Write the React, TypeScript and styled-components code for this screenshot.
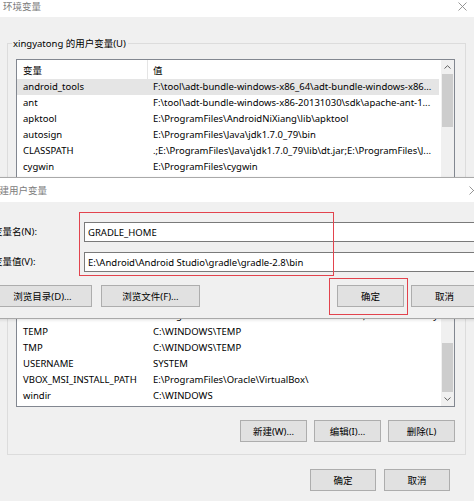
import React from 'react';
import styled, { createGlobalStyle } from 'styled-components';

const GlobalStyle = createGlobalStyle`
  html, body { margin: 0; padding: 0; background: #f0f0f0; }
  body {
    font-family: "Noto Sans", "Noto Sans CJK SC", sans-serif;
    font-size: 9.5px;
    color: #000;
  }
  * { box-sizing: border-box; }
`;

const Stage = styled.div`
  position: relative;
  width: 474px;
  height: 501px;
  overflow: hidden;
  background: #f0f0f0;
`;

const Window = styled.div`
  display: flex;
  flex-direction: column;
  height: 100%;
`;

const TitleBar = styled.div<{ $tall?: boolean }>`
  display: flex;
  align-items: center;
  flex-shrink: 0;
  background: #fff;
  height: ${(p) => (p.$tall ? 24 : 17)}px;
  padding: ${(p) => (p.$tall ? '0 10px 0 7px' : '0 7px 4px 3px')};
`;

const TitleText = styled.span`
  color: #7c7c7c;
  line-height: 13px;
  white-space: nowrap;
`;

const CloseBtn = styled.svg`
  margin-left: auto;
  width: 9px;
  height: 9px;
  flex-shrink: 0;
`;

const MainBody = styled.div`
  flex: 1;
  display: flex;
  flex-direction: column;
  padding: 26px 8px 9px 7px;
`;

const GroupBox = styled.div<{ $gapTop?: number }>`
  display: flex;
  flex-direction: column;
  border: 1px solid #dcdcdc;
  padding: 0 10px 12px 8px;
  margin-top: ${(p) => p.$gapTop ?? 0}px;
`;

const GroupTitle = styled.span`
  align-self: flex-start;
  margin: -7px 0 0 -4px;
  padding: 0 2px 0 1px;
  height: 13px;
  line-height: 13px;
  background: #f0f0f0;
  white-space: nowrap;
`;

const ListBox = styled.div<{ $h: number }>`
  display: flex;
  margin-top: 9px;
  height: ${(p) => p.$h}px;
  border: 1px solid #828790;
  background: #fff;
`;

const ListMain = styled.div`
  flex: 1;
  min-width: 0;
  display: flex;
  flex-direction: column;
  overflow: hidden;
`;

const HeaderRow = styled.div`
  display: grid;
  grid-template-columns: 131px 1fr;
  height: 19px;
  flex-shrink: 0;
`;

const HeaderCell = styled.div<{ $first?: boolean }>`
  display: flex;
  align-items: center;
  padding-left: ${(p) => (p.$first ? 6 : 5)}px;
  border-right: ${(p) => (p.$first ? '1px solid #e5e5e5' : 'none')};
`;

const Rows = styled.div<{ $bottom?: boolean }>`
  flex: 1;
  display: flex;
  flex-direction: column;
  justify-content: ${(p) => (p.$bottom ? 'flex-end' : 'flex-start')};
  overflow: hidden;
  padding-bottom: ${(p) => (p.$bottom ? 2 : 0)}px;
`;

const Row = styled.div<{ $selected?: boolean }>`
  display: grid;
  grid-template-columns: 131px 1fr;
  height: 16px;
  line-height: 16px;
  flex-shrink: 0;
  background: ${(p) => (p.$selected ? '#e5e5e5' : 'transparent')};
`;

const Cell = styled.div<{ $first?: boolean }>`
  white-space: nowrap;
  overflow: hidden;
  padding-left: ${(p) => (p.$first ? 6 : 5)}px;
`;

const ScrollTrack = styled.div`
  width: 13px;
  flex-shrink: 0;
  margin-left: 2px;
  background: #f0f0f0;
  display: flex;
  flex-direction: column;
`;

const ScrollArrow = styled.div`
  height: 14px;
  flex-shrink: 0;
  display: flex;
  align-items: center;
  justify-content: center;
`;

const ThumbArea = styled.div`
  flex: 1;
  display: flex;
  flex-direction: column;
`;

const Thumb = styled.div<{ $offset: number; $len: number }>`
  margin: ${(p) => p.$offset}px 1px 0 1px;
  height: ${(p) => p.$len}px;
  background: #cdcdcd;
`;

const ButtonRow = styled.div<{ $gap: number; $mt: number; $mr?: number }>`
  display: flex;
  justify-content: flex-end;
  gap: ${(p) => p.$gap}px;
  margin-top: ${(p) => p.$mt}px;
  margin-right: ${(p) => p.$mr ?? 0}px;
`;

const Button = styled.button<{ $w: number }>`
  width: ${(p) => p.$w}px;
  height: 22px;
  padding: 0;
  border: 1px solid #adadad;
  background: #e1e1e1;
  font: inherit;
  color: #000;
  white-space: nowrap;
  flex-shrink: 0;
`;

const Overlay = styled.div`
  position: absolute;
  left: -18px;
  top: 177px;
  width: 507px;
  display: flex;
  flex-direction: column;
  background: #f0f0f0;
  border: 1px solid #a9a9a9;
  box-shadow: 0 1px 3px rgba(0, 0, 0, 0.12);
`;

const OverlayBody = styled.div`
  display: flex;
  flex-direction: column;
  padding: 20px 10px 11px 10px;
`;

const FormGrid = styled.div`
  display: grid;
  grid-template-columns: 91px 1fr;
  row-gap: 10px;
  align-items: center;
`;

const FieldLabel = styled.label`
  line-height: 20px;
  white-space: nowrap;
`;

const TextInput = styled.input`
  width: 100%;
  height: 20px;
  border: 1px solid #7a7a7a;
  background: #fff;
  padding: 0 3px;
  font: inherit;
  color: #000;
  outline: none;
`;

const SplitRow = styled.div`
  display: flex;
  justify-content: space-between;
  margin-top: 13px;
`;

const Group = styled.div<{ $gap: number }>`
  display: flex;
  gap: ${(p) => p.$gap}px;
`;

const Annotation = styled.div<{ $x: number; $y: number; $w: number; $h: number }>`
  position: absolute;
  left: ${(p) => p.$x}px;
  top: ${(p) => p.$y}px;
  width: ${(p) => p.$w}px;
  height: ${(p) => p.$h}px;
  border: 1px solid #e2434d;
  pointer-events: none;
`;

const CloseIcon = () => (
  <CloseBtn viewBox="0 0 9 9">
    <path d="M0.5 0.5 L8.5 8.5 M8.5 0.5 L0.5 8.5" stroke="#8a8a8a" strokeWidth="0.9" fill="none" />
  </CloseBtn>
);

const Chevron = ({ up }: { up?: boolean }) => (
  <svg width="7" height="4" viewBox="0 0 7 4">
    <path
      d={up ? 'M0.5 3.5 L3.5 0.7 L6.5 3.5' : 'M0.5 0.5 L3.5 3.3 L6.5 0.5'}
      stroke="#606060"
      strokeWidth="1"
      fill="none"
    />
  </svg>
);

type Variable = [string, string];

const userVars: Variable[] = [
  ['android_tools', 'F:\\tool\\adt-bundle-windows-x86_64\\adt-bundle-windows-x86...'],
  ['ant', 'F:\\tool\\adt-bundle-windows-x86-20131030\\sdk\\apache-ant-1...'],
  ['apktool', 'E:\\ProgramFiles\\AndroidNiXiang\\lib\\apktool'],
  ['autosign', 'E:\\ProgramFiles\\Java\\jdk1.7.0_79\\bin'],
  ['CLASSPATH', '.;E:\\ProgramFiles\\Java\\jdk1.7.0_79\\lib\\dt.jar;E:\\ProgramFiles\\J...'],
  ['cygwin', 'E:\\ProgramFiles\\cygwin'],
  ['JAVA_HOME', 'E:\\ProgramFiles\\Java\\jdk1.7.0_79'],
  ['Path', 'E:\\ProgramFiles\\Java\\jdk1.7.0_79\\bin'],
];

const systemVars: Variable[] = [
  ['ComSpec', 'C:\\WINDOWS\\system32\\cmd.exe'],
  ['NUMBER_OF_PROCESSORS', '4'],
  ['OS', 'Windows_NT'],
  ['Path', 'C:\\ProgramData\\Oracle\\Java\\javapath;C:\\WINDOWS\\system32'],
  ['PSModulePath', '%ProgramFiles%\\WindowsPowerShell\\Modules;C:\\WINDOWS\\sy...'],
  ['TEMP', 'C:\\WINDOWS\\TEMP'],
  ['TMP', 'C:\\WINDOWS\\TEMP'],
  ['USERNAME', 'SYSTEM'],
  ['VBOX_MSI_INSTALL_PATH', 'E:\\ProgramFiles\\Oracle\\VirtualBox\\'],
  ['windir', 'C:\\WINDOWS'],
];

const VarList = ({
  vars,
  height,
  bottom,
  selected,
  thumbOffset,
  thumbLen,
}: {
  vars: Variable[];
  height: number;
  bottom?: boolean;
  selected?: number;
  thumbOffset: number;
  thumbLen: number;
}) => (
  <ListBox $h={height}>
    <ListMain>
      <HeaderRow>
        <HeaderCell $first>变量</HeaderCell>
        <HeaderCell>值</HeaderCell>
      </HeaderRow>
      <Rows $bottom={bottom}>
        {vars.map(([name, value], i) => (
          <Row key={name + i} $selected={i === selected}>
            <Cell $first>{name}</Cell>
            <Cell>{value}</Cell>
          </Row>
        ))}
      </Rows>
    </ListMain>
    <ScrollTrack>
      <ScrollArrow>
        <Chevron up />
      </ScrollArrow>
      <ThumbArea>
        <Thumb $offset={thumbOffset} $len={thumbLen} />
      </ThumbArea>
      <ScrollArrow>
        <Chevron />
      </ScrollArrow>
    </ScrollTrack>
  </ListBox>
);

export default function App() {
  return (
    <>
      <GlobalStyle />
      <Stage>
        <Window>
          <TitleBar>
            <TitleText>环境变量</TitleText>
            <CloseIcon />
          </TitleBar>
          <MainBody>
            <GroupBox>
              <GroupTitle>xingyatong 的用户变量(U)</GroupTitle>
              <VarList vars={userVars} height={141} selected={0} thumbOffset={0} thumbLen={53} />
              <ButtonRow $gap={7} $mt={13}>
                <Button $w={67}>新建(N)...</Button>
                <Button $w={67}>编辑(E)...</Button>
                <Button $w={67}>删除(D)</Button>
              </ButtonRow>
            </GroupBox>
            <GroupBox $gapTop={20}>
              <GroupTitle>系统变量(S)</GroupTitle>
              <VarList vars={systemVars} height={123} bottom thumbOffset={44} thumbLen={49} />
              <ButtonRow $gap={7} $mt={13}>
                <Button $w={67}>新建(W)...</Button>
                <Button $w={67}>编辑(I)...</Button>
                <Button $w={67}>删除(L)</Button>
              </ButtonRow>
            </GroupBox>
            <ButtonRow $gap={8} $mt={14} $mr={16}>
              <Button $w={66}>确定</Button>
              <Button $w={66}>取消</Button>
            </ButtonRow>
          </MainBody>
        </Window>

        <Overlay>
          <TitleBar $tall>
            <TitleText>新建用户变量</TitleText>
            <CloseIcon />
          </TitleBar>
          <OverlayBody>
            <FormGrid>
              <FieldLabel>变量名(N):</FieldLabel>
              <TextInput readOnly value="GRADLE_HOME" />
              <FieldLabel>变量值(V):</FieldLabel>
              <TextInput readOnly value="E:\Android\Android Studio\gradle\gradle-2.8\bin" />
            </FormGrid>
            <SplitRow>
              <Group $gap={9}>
                <Button $w={99}>浏览目录(D)...</Button>
                <Button $w={99}>浏览文件(F)...</Button>
              </Group>
              <Group $gap={7}>
                <Button $w={67}>确定</Button>
                <Button $w={67}>取消</Button>
              </Group>
            </SplitRow>
          </OverlayBody>
        </Overlay>

        <Annotation $x={79} $y={212} $w={255} $h={64} />
        <Annotation $x={329} $y={278} $w={79} $h={37} />
      </Stage>
    </>
  );
}
